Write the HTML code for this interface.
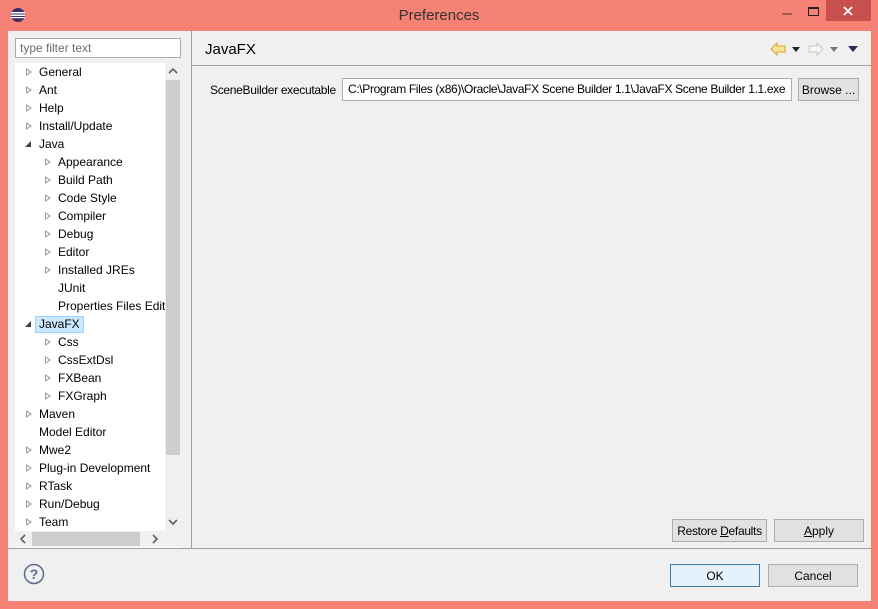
<!DOCTYPE html><html><head><style>
*{margin:0;padding:0;box-sizing:border-box}
body{width:878px;height:609px;background:#f58275;font-family:"Liberation Sans",sans-serif;font-size:12px;color:#000;position:relative;overflow:hidden}
.a{position:absolute}
.client{left:8px;top:31px;width:863px;height:570px;background:#f0f0f0}
.title{left:0;top:7px;width:878px;text-align:center;font-size:15px;color:#333}
.row{position:absolute;height:18px;line-height:18px;white-space:nowrap}
.tri{position:absolute;width:0;height:0;border-left:6px solid #a0a0a0;border-top:4px solid transparent;border-bottom:4px solid transparent;top:5px}
.tri:after{content:"";position:absolute;left:-5px;top:-2px;border-left:3px solid #fff;border-top:2px solid transparent;border-bottom:2px solid transparent}
.open{position:absolute;width:0;height:0;border-right:6px solid #404040;border-top:6px solid transparent;top:6px}
.btn{position:absolute;background:#e1e1e1;border:1px solid #adadad;text-align:center;line-height:22px;height:23px}
</style></head><body>
<div class="a title">Preferences</div>
<svg class="a" style="left:10px;top:7px" width="16" height="16"><circle cx="8" cy="8" r="7" fill="#3b2e6e"/><rect x="1" y="5" width="14" height="1.5" fill="#fff"/><rect x="1" y="7.5" width="14" height="1.5" fill="#fff"/><rect x="1" y="10" width="14" height="1.2" fill="#fff"/></svg>
<div class="a" style="left:782px;top:13px;width:10px;height:2px;background:#a05a50"></div>
<div class="a" style="left:808px;top:7px;width:11px;height:9px;border:1px solid #222;border-top:2px solid #222"></div>
<div class="a" style="left:826px;top:0;width:45px;height:21px;background:#c74f4d"></div>
<svg class="a" style="left:843px;top:6px" width="10" height="10"><path d="M1 1L9 9M9 1L1 9" stroke="#fff" stroke-width="1.8"/></svg>
<div class="a client"></div>
<!-- left -->
<div class="a" style="left:15px;top:38px;width:166px;height:20px;background:#fff;border:1px solid #abadb3;color:#6d6d6d;line-height:18px;padding-left:4px">type filter text</div>
<div class="a" style="left:15px;top:63px;width:166px;height:485px;background:#fff"></div>
<div class="a" style="left:165px;top:63px;width:16px;height:468px;background:#f0f0f0"></div>
<div class="a" style="left:166px;top:80px;width:14px;height:375px;background:#cdcdcd"></div>
<svg class="a" style="left:168px;top:68px" width="10" height="7"><path d="M1 5L5 1L9 5" fill="none" stroke="#606060" stroke-width="1.6"/></svg>
<svg class="a" style="left:168px;top:519px" width="10" height="7"><path d="M1 1L5 5L9 1" fill="none" stroke="#606060" stroke-width="1.6"/></svg>
<div class="a" style="left:15px;top:531px;width:166px;height:16px;background:#f0f0f0"></div>
<div class="a" style="left:32px;top:532px;width:108px;height:14px;background:#cdcdcd"></div>
<svg class="a" style="left:20px;top:534px" width="7" height="10"><path d="M5 1L1 5L5 9" fill="none" stroke="#606060" stroke-width="1.6"/></svg>
<svg class="a" style="left:152px;top:534px" width="7" height="10"><path d="M1 1L5 5L1 9" fill="none" stroke="#606060" stroke-width="1.6"/></svg>
<div class="a" style="left:15px;top:63px;width:150px;height:468px;overflow:hidden">
<div class="row" style="top:0"><i class="tri" style="left:11px"></i><span style="position:absolute;left:24px">General</span></div>
<div class="row" style="top:18px"><i class="tri" style="left:11px"></i><span style="position:absolute;left:24px">Ant</span></div>
<div class="row" style="top:36px"><i class="tri" style="left:11px"></i><span style="position:absolute;left:24px">Help</span></div>
<div class="row" style="top:54px"><i class="tri" style="left:11px"></i><span style="position:absolute;left:24px">Install/Update</span></div>
<div class="row" style="top:72px"><i class="open" style="left:10px"></i><span style="position:absolute;left:24px">Java</span></div>
<div class="row" style="top:90px"><i class="tri" style="left:30px"></i><span style="position:absolute;left:43px">Appearance</span></div>
<div class="row" style="top:108px"><i class="tri" style="left:30px"></i><span style="position:absolute;left:43px">Build Path</span></div>
<div class="row" style="top:126px"><i class="tri" style="left:30px"></i><span style="position:absolute;left:43px">Code Style</span></div>
<div class="row" style="top:144px"><i class="tri" style="left:30px"></i><span style="position:absolute;left:43px">Compiler</span></div>
<div class="row" style="top:162px"><i class="tri" style="left:30px"></i><span style="position:absolute;left:43px">Debug</span></div>
<div class="row" style="top:180px"><i class="tri" style="left:30px"></i><span style="position:absolute;left:43px">Editor</span></div>
<div class="row" style="top:198px"><i class="tri" style="left:30px"></i><span style="position:absolute;left:43px">Installed JREs</span></div>
<div class="row" style="top:216px"><span style="position:absolute;left:43px">JUnit</span></div>
<div class="row" style="top:234px"><span style="position:absolute;left:43px">Properties Files Editor</span></div>
<div class="row" style="top:252px"><i class="open" style="left:10px"></i><span style="position:absolute;left:20px;top:1px;height:17px;line-height:15px;padding:0 3px;background:#cce8ff;border:1px solid #99d1ff">JavaFX</span></div>
<div class="row" style="top:270px"><i class="tri" style="left:30px"></i><span style="position:absolute;left:43px">Css</span></div>
<div class="row" style="top:288px"><i class="tri" style="left:30px"></i><span style="position:absolute;left:43px">CssExtDsl</span></div>
<div class="row" style="top:306px"><i class="tri" style="left:30px"></i><span style="position:absolute;left:43px">FXBean</span></div>
<div class="row" style="top:324px"><i class="tri" style="left:30px"></i><span style="position:absolute;left:43px">FXGraph</span></div>
<div class="row" style="top:342px"><i class="tri" style="left:11px"></i><span style="position:absolute;left:24px">Maven</span></div>
<div class="row" style="top:360px"><span style="position:absolute;left:24px">Model Editor</span></div>
<div class="row" style="top:378px"><i class="tri" style="left:11px"></i><span style="position:absolute;left:24px">Mwe2</span></div>
<div class="row" style="top:396px"><i class="tri" style="left:11px"></i><span style="position:absolute;left:24px">Plug-in Development</span></div>
<div class="row" style="top:414px"><i class="tri" style="left:11px"></i><span style="position:absolute;left:24px">RTask</span></div>
<div class="row" style="top:432px"><i class="tri" style="left:11px"></i><span style="position:absolute;left:24px">Run/Debug</span></div>
<div class="row" style="top:450px"><i class="tri" style="left:11px"></i><span style="position:absolute;left:24px">Team</span></div>
</div>
<!-- right -->
<div class="a" style="left:191px;top:31px;width:1px;height:517px;background:#a0a0a0"></div>
<div class="a" style="left:192px;top:65px;width:679px;height:1px;background:#a0a0a0"></div>
<div class="a" style="left:205px;top:41px;font-size:15px">JavaFX</div>
<svg class="a" style="left:770px;top:42px" width="90" height="14">
<path d="M1 7 L7 1 V4 H15 V10 H7 V13 Z" fill="#fde39a" stroke="#d9a530"/>
<path d="M22 5 h8 l-4 5z" fill="#222"/>
<path d="M53 7 L47 1 V4 H39 V10 H47 V13 Z" fill="#f6f6f6" stroke="#c8c8c8"/>
<path d="M60 5 h8 l-4 5z" fill="#777"/>
<path d="M78 4 h10 l-5 6z" fill="#2a2a5a"/>
</svg>
<div class="a" style="left:210px;top:83px;letter-spacing:-0.3px">SceneBuilder executable</div>
<div class="a" style="left:342px;top:78px;width:450px;height:23px;background:#fff;border:1px solid #abadb3;line-height:21px;padding-left:5px;white-space:nowrap;overflow:hidden;letter-spacing:-0.35px">C:\Program Files (x86)\Oracle\JavaFX Scene Builder 1.1\JavaFX Scene Builder 1.1.exe</div>
<div class="btn" style="left:798px;top:78px;width:61px">Browse ...</div>
<div class="btn" style="left:672px;top:519px;width:95px;letter-spacing:-0.3px">Restore <u>D</u>efaults</div>
<div class="btn" style="left:774px;top:519px;width:90px"><u>A</u>pply</div>
<div class="a" style="left:8px;top:548px;width:863px;height:1px;background:#a0a0a0"></div>
<svg class="a" style="left:23px;top:563px" width="22" height="22"><circle cx="11" cy="11" r="9.5" fill="none" stroke="#5a6a8a" stroke-width="1.5"/><text x="11" y="16" text-anchor="middle" font-family="Liberation Sans" font-weight="bold" font-size="14" fill="#5a6a8a">?</text></svg>
<div class="btn" style="left:670px;top:564px;width:90px;border-color:#3c7fb1;background:#e5f1fb">OK</div>
<div class="btn" style="left:768px;top:564px;width:90px">Cancel</div>
</body></html>
